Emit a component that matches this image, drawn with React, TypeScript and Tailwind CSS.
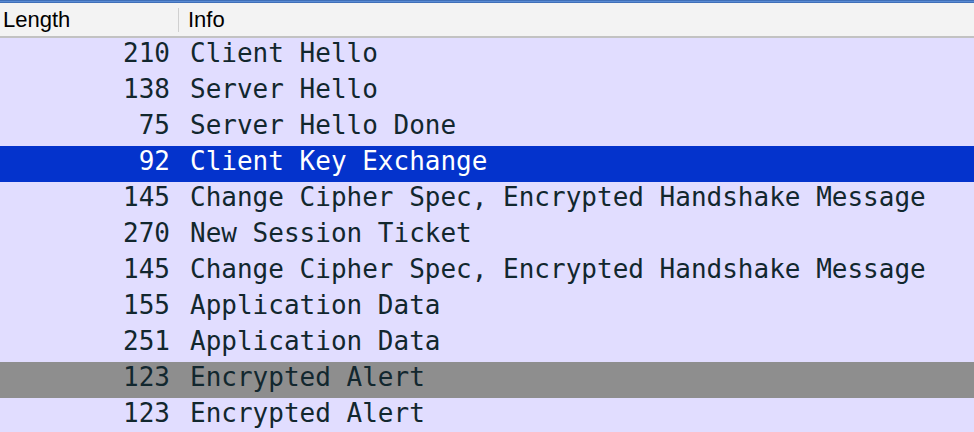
import React from "react";

type Row = { length: number; info: string; state?: "selected" | "marked" };

const ROWS: Row[] = [
  { length: 210, info: "Client Hello" },
  { length: 138, info: "Server Hello" },
  { length: 75, info: "Server Hello Done" },
  { length: 92, info: "Client Key Exchange", state: "selected" },
  { length: 145, info: "Change Cipher Spec, Encrypted Handshake Message" },
  { length: 270, info: "New Session Ticket" },
  { length: 145, info: "Change Cipher Spec, Encrypted Handshake Message" },
  { length: 155, info: "Application Data" },
  { length: 251, info: "Application Data" },
  { length: 123, info: "Encrypted Alert", state: "marked" },
  { length: 123, info: "Encrypted Alert" },
];

const rowClass = (state?: Row["state"]) => {
  if (state === "selected") return "bg-[#0433cc] text-white";
  if (state === "marked") return "bg-[#8e8e8e] text-[#12272e]";
  return "bg-[#e1ddff] text-[#12272e]";
};

const App: React.FC = () => {
  return (
    <div className="w-[974px] h-[432px] overflow-hidden bg-[#e1ddff]">
      {/* top edge */}
      <div className="h-[3px] bg-[#5a8bd4] border-y border-[#3f6fb8]" />

      {/* header */}
      <div className="flex items-center h-[35px] bg-[#f3f3f3] border-b-2 border-[#c2c2c2] font-['Liberation_Sans',sans-serif] text-[22px] text-black">
        <div className="w-[179px] pl-[3px] border-r border-[#d0d0d0] h-[24px] flex items-center">
          Length
        </div>
        <div className="pl-[9px]">Info</div>
      </div>

      {/* rows */}
      <div className="font-['DejaVu_Sans_Mono',monospace] text-[26px] leading-[30px]">
        {ROWS.map((row, i) => (
          <div key={i} className={`flex items-center h-[36px] pb-[6px] ${rowClass(row.state)}`}>
            <div className="w-[170px] text-right">{row.length}</div>
            <div className="pl-[20px] whitespace-nowrap">{row.info}</div>
          </div>
        ))}
      </div>
    </div>
  );
};

export default App;
